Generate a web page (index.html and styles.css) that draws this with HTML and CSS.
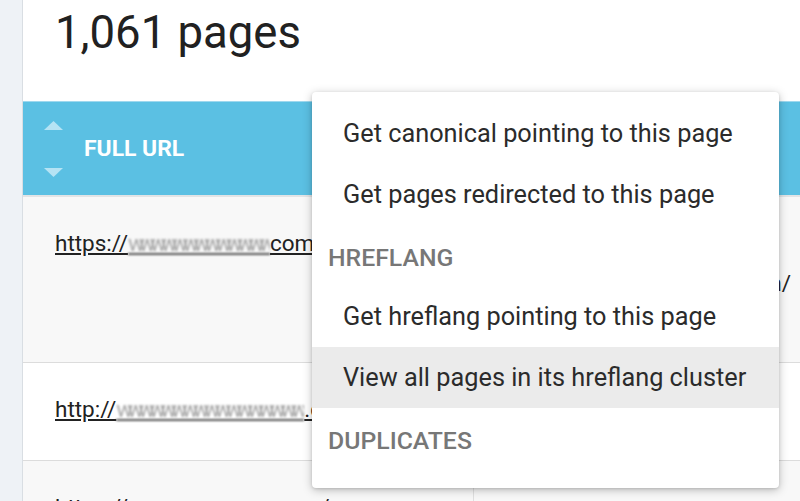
FILE: index.html
```html
<!DOCTYPE html>
<html lang="en">
<head>
<meta charset="utf-8">
<title>1,061 pages</title>
<link rel="stylesheet" href="styles.css">
</head>
<body>
<div class="app">
  <aside class="sidebar"></aside>
  <main class="main">
    <header class="title-area">
      <h1 class="title">1,061 pages</h1>
    </header>
    <div class="table">
      <div class="thead">
        <div class="th">
          <div class="sorter">
            <svg class="arrow" width="19" height="9" viewBox="0 0 19 9"><polygon points="9.5,0 19,9 0,9"/></svg>
            <svg class="arrow" width="19" height="9" viewBox="0 0 19 9"><polygon points="0,0 19,0 9.5,9"/></svg>
          </div>
          <span class="th-label">FULL URL</span>
        </div>
      </div>
      <div class="row row-tall row-alt">
        <div class="cell cell-url"><a class="link" href="#">https://<span class="blur blur-short">wwwwwwwwwwwwwwwwwwwwwwwwwwwwwwww</span>com/</a></div>
        <div class="cell cell-second">
          <div class="line">https://www.site.com/</div>
          <div class="line line-end">site.com/en/</div>
        </div>
      </div>
      <div class="row row-mid">
        <div class="cell cell-url"><a class="link" href="#">http://<span class="blur blur-long">wwwwwwwwwwwwwwwwwwwwwwwwwwwwwwwwwwwwwwww</span>.com/</a></div>
        <div class="cell cell-second"></div>
      </div>
      <div class="row row-alt">
        <div class="cell cell-url"><a class="link" href="#">https://<span class="blur blur-short">wwwwwwwwwwwwwwwwwwwwwwwwwwwwwwww</span>.com/</a></div>
        <div class="cell cell-second"></div>
      </div>
    </div>
  </main>
</div>
<div class="menu">
  <div class="menu-item">Get canonical pointing to this page</div>
  <div class="menu-item">Get pages redirected to this page</div>
  <div class="menu-heading">HREFLANG</div>
  <div class="menu-item">Get hreflang pointing to this page</div>
  <div class="menu-item is-hover">View all pages in its hreflang cluster</div>
  <div class="menu-heading">DUPLICATES</div>
</div>
</body>
</html>
```

FILE: styles.css
```css
* { box-sizing: border-box; }
html, body { margin: 0; padding: 0; }
body {
  font-family: Roboto, "Liberation Sans", sans-serif;
  color: #222;
  background: #fff;
  width: 800px;
  height: 501px;
  overflow: hidden;
  position: relative;
}
.app {
  display: flex;
  height: 501px;
}
.sidebar {
  width: 23px;
  flex: none;
  background: #eef2f6;
  border-right: 1px solid #d9dee3;
}
.main {
  flex: 1;
  min-width: 0;
  background: #fff;
}
.title-area {
  height: 101px;
  padding: 10px 0 0 32px;
}
.title {
  margin: 0;
  font-size: 45.5px;
  line-height: 45px;
  font-weight: 400;
  color: #212121;
}
.thead {
  height: 96px;
  background: #5bc0e3;
  border-top: 1px solid #9fd8ee;
  border-bottom: 2px solid #e2e4e6;
  display: flex;
  align-items: center;
}
.th {
  display: flex;
  align-items: center;
  padding-left: 21px;
  gap: 21px;
}
.sorter {
  display: flex;
  flex-direction: column;
  justify-content: space-between;
  height: 56px;
}
.arrow { display: block; fill: #b5e3f4; }
.th-label {
  color: #fff;
  font-weight: 700;
  font-size: 22.9px;
}
.row {
  display: flex;
  border-bottom: 1px solid #dcdcdc;
  background: #fff;
}
.row-alt { background: #f8f8f8; }
.row-tall { height: 166px; }
.row-mid { height: 98px; }
.row:last-child { height: 60px; border-bottom: 0; }
.cell {
  padding-top: 26px;
  font-size: 22.5px;
  line-height: 40px;
}
.cell-url {
  width: 451px;
  flex: none;
  padding-left: 32px;
  border-right: 1px solid #e0e0e0;
  white-space: nowrap;
  overflow: hidden;
}
.cell-second {
  flex: 1;
  min-width: 0;
  padding-left: 32px;
  padding-right: 9px;
  white-space: nowrap;
  overflow: hidden;
}
.line-end { text-align: right; }
.link {
  color: #222;
  text-decoration: underline;
}
.blur {
  display: inline-block;
  vertical-align: bottom;
  height: 40px;
  overflow: hidden;
  color: #a8a8a8;
  letter-spacing: -6px;
  filter: blur(1.1px);
  text-decoration: underline;
  text-decoration-color: #555;
}
.blur-short { width: 142px; }
.blur-long { width: 188px; }
.menu {
  position: absolute;
  left: 312px;
  top: 92px;
  width: 467px;
  height: 396px;
  background: #fff;
  border-radius: 4px;
  box-shadow: 0 2px 10px rgba(0, 0, 0, 0.25), 0 1px 3px rgba(0, 0, 0, 0.12);
  padding-top: 11px;
}
.menu-item {
  height: 61px;
  line-height: 61px;
  padding-left: 31px;
  font-size: 25.3px;
  color: #2b2b2b;
  white-space: nowrap;
}
.menu-item.is-hover { background: #ebebeb; }
.menu-heading {
  height: 61px;
  padding-top: 4px;
  line-height: 57px;
  padding-left: 16px;
  font-size: 24.8px;
  font-weight: 500;
  color: #777;
}
```
